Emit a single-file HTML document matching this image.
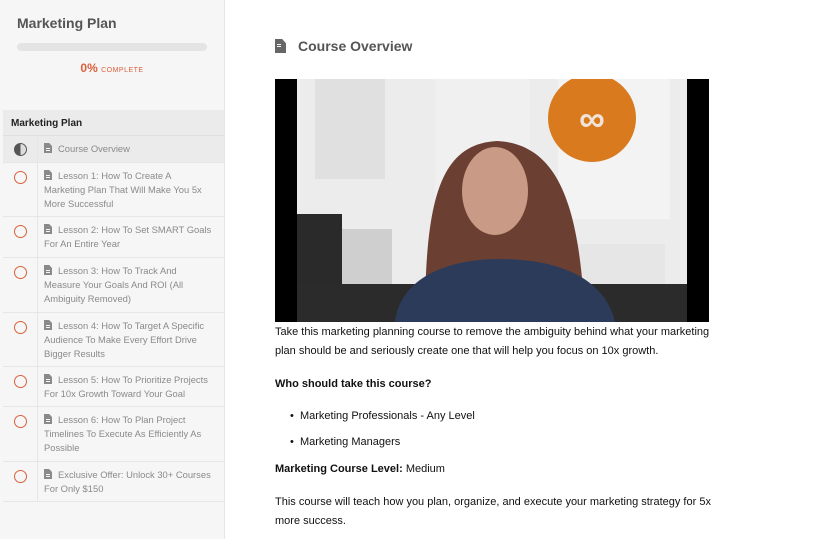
<!DOCTYPE html>
<html><head><meta charset="utf-8">
<style>
*{margin:0;padding:0;box-sizing:border-box}
body{width:828px;height:539px;overflow:hidden;background:#fff;font-family:"Liberation Sans",sans-serif;position:relative}
.side{position:absolute;left:0;top:0;width:225px;height:539px;background:#f6f6f6;border-right:1px solid #e6e6e6}
.title{position:absolute;left:17px;top:15px;font-size:14px;font-weight:bold;color:#555}
.bar{position:absolute;left:17px;top:43px;width:190px;height:8px;border-radius:4px;background:#e4e4e4}
.pct{position:absolute;left:0;width:224px;top:61px;text-align:center;color:#d9603c;font-weight:bold;font-size:12px}
.pct span{font-size:7px;font-weight:normal;letter-spacing:.5px}
.sec{position:absolute;left:3px;top:110px;width:221px;height:26px;background:#ebebeb;border-bottom:1px solid #e0e0e0;font-size:10px;font-weight:bold;color:#222;padding:8px 0 0 8px}
.row{position:absolute;left:3px;width:221px;border-bottom:1px solid #e6e6e6}
.row .c{position:absolute;left:11px;top:8px;width:13px;height:13px;border:1.5px solid #d9603c;border-radius:50%}
.row .v{position:absolute;left:34px;top:0;bottom:0;border-left:1px solid #e6e6e6}
.row .t{position:absolute;left:41px;top:6px;width:165px;font-size:9.4px;line-height:14px;color:#8a8a8a}
.row .t.w{width:176px}
.doc{display:inline-block;width:8px;height:10px;background:#8a8a8a;vertical-align:-1px;margin-right:6px;position:relative;clip-path:polygon(0 0,65% 0,100% 30%,100% 100%,0 100%)}
.doc:after{content:"";position:absolute;left:2px;top:5px;width:4px;height:1px;background:#f6f6f6;box-shadow:0 2px 0 #f6f6f6}
.main{position:absolute;left:275px;top:0;width:440px;color:#111;font-size:11px}
h1{position:absolute;left:0;top:38px;font-size:14px;color:#555;white-space:nowrap}
h1 .doc{width:11px;height:14px;background:#666;margin-right:12px;vertical-align:-2px}
.video{position:absolute;left:275px;top:79px;width:434px;height:243px;background:#000;overflow:hidden}
.p{position:absolute;left:275px;font-size:11px;color:#111;white-space:nowrap}
</style></head><body>
<div class="side">
<div class="title">Marketing Plan</div>
<div class="bar"></div>
<div class="pct">0% <span>COMPLETE</span></div>
<div class="sec">Marketing Plan</div>
<div class="row" style="top:136px;height:27px;background:#ebebeb"><div class="c" style="background:linear-gradient(90deg,#555 50%,#ddd 50%);border:1.5px solid #555;top:7px"></div><div class="v"></div><div class="t" style="top:6px"><span class="doc"></span>Course Overview</div></div>
<div class="row" style="top:163px;height:54px"><div class="c"></div><div class="v"></div><div class="t"><span class="doc"></span>Lesson 1: How To Create A Marketing Plan That Will Make You 5x More Successful</div></div>
<div class="row" style="top:217px;height:41px"><div class="c"></div><div class="v"></div><div class="t w"><span class="doc"></span>Lesson 2: How To Set SMART Goals For An Entire Year</div></div>
<div class="row" style="top:258px;height:55px"><div class="c"></div><div class="v"></div><div class="t"><span class="doc"></span>Lesson 3: How To Track And Measure Your Goals And ROI (All Ambiguity Removed)</div></div>
<div class="row" style="top:313px;height:54px"><div class="c"></div><div class="v"></div><div class="t"><span class="doc"></span>Lesson 4: How To Target A Specific Audience To Make Every Effort Drive Bigger Results</div></div>
<div class="row" style="top:367px;height:40px"><div class="c"></div><div class="v"></div><div class="t"><span class="doc"></span>Lesson 5: How To Prioritize Projects For 10x Growth Toward Your Goal</div></div>
<div class="row" style="top:407px;height:55px"><div class="c"></div><div class="v"></div><div class="t"><span class="doc"></span>Lesson 6: How To Plan Project Timelines To Execute As Efficiently As Possible</div></div>
<div class="row" style="top:462px;height:40px"><div class="c"></div><div class="v"></div><div class="t w"><span class="doc"></span>Exclusive Offer: Unlock 30+ Courses For Only $150</div></div>
</div>
<div class="main"><h1><span class="doc"></span>Course Overview</h1></div>
<div class="video">
<svg width="434" height="243" viewBox="0 0 434 243">
<rect x="22" y="0" width="390" height="243" fill="#ececec"/>
<rect x="40" y="0" width="70" height="100" fill="#e0e0e0"/>
<rect x="160" y="0" width="95" height="243" fill="#f0f0f0"/>
<rect x="283" y="0" width="112" height="140" fill="#f3f3f3"/>
<circle cx="317" cy="39" r="44" fill="#d97a1e"/>
<text x="317" y="52" text-anchor="middle" font-family="Liberation Sans" font-weight="bold" font-size="36" fill="#f0e4d8">∞</text>
<rect x="22" y="135" width="45" height="108" fill="#2a2a2a"/>
<rect x="67" y="150" width="50" height="80" fill="#cfcfcf"/>
<rect x="300" y="165" width="90" height="78" fill="#e6e6e6"/>
<rect x="0" y="205" width="434" height="38" fill="#2b2b2b"/>
<path d="M150 243 C150 120 165 65 222 62 C285 65 305 130 310 243 Z" fill="#6b4032"/>
<ellipse cx="220" cy="112" rx="33" ry="44" fill="#c99a85"/>
<path d="M120 243 C125 200 170 180 225 180 C285 180 330 200 340 243 Z" fill="#2d3b5a"/>
<rect x="0" y="0" width="22" height="243" fill="#000"/>
<rect x="412" y="0" width="22" height="243" fill="#000"/>
</svg>
</div>
<div class="p" style="top:326px">Take this marketing planning course to remove the ambiguity behind what your marketing</div>
<div class="p" style="top:345px">plan should be and seriously create one that will help you focus on 10x growth.</div>
<div class="p" style="top:378px;font-weight:bold">Who should take this course?</div>
<div class="p" style="top:410px;left:290px">•&nbsp;&nbsp;Marketing Professionals - Any Level</div>
<div class="p" style="top:436px;left:290px">•&nbsp;&nbsp;Marketing Managers</div>
<div class="p" style="top:463px"><b>Marketing Course Level:</b> Medium</div>
<div class="p" style="top:496px">This course will teach how you plan, organize, and execute your marketing strategy for 5x</div>
<div class="p" style="top:515px">more success.</div>
</body></html>
